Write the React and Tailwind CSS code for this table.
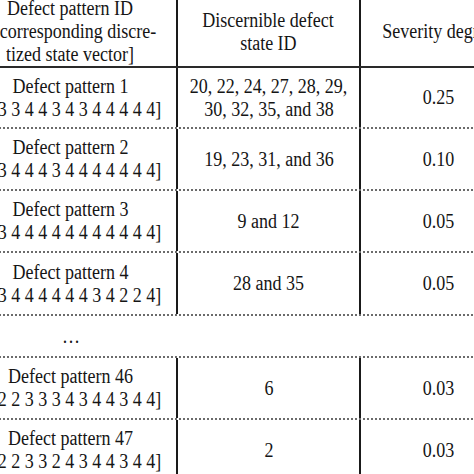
import React from "react";

const rows = [
  { h: "h-[61px]", name: "Defect pattern 1", vec: "[3 3 3 4 4 3 4 3 4 4 4 4 4]", ids: ["20, 22, 24, 27, 28, 29,", "30, 32, 35, and 38"], sev: "0.25" },
  { h: "h-[62px]", name: "Defect pattern 2", vec: "[3 3 4 4 4 3 4 4 4 4 4 4 4]", ids: ["19, 23, 31, and 36"], sev: "0.10" },
  { h: "h-[62px]", name: "Defect pattern 3", vec: "[3 3 4 4 4 4 4 4 4 4 4 4 4]", ids: ["9 and 12"], sev: "0.05" },
  { h: "h-[63px]", name: "Defect pattern 4", vec: "[3 3 4 4 4 4 4 4 3 4 2 2 4]", ids: ["28 and 35"], sev: "0.05" },
];

const rows2 = [
  { h: "h-[62px]", name: "Defect pattern 46", vec: "[2 2 2 3 3 3 4 3 4 4 3 4 4]", ids: ["6"], sev: "0.03" },
  { h: "h-[62px]", name: "Defect pattern 47", vec: "[2 2 2 3 3 2 4 3 4 4 3 4 4]", ids: ["2"], sev: "0.03" },
];

function Line({ children, className = "" }) {
  return <div className={`whitespace-nowrap scale-x-90 ${className}`}>{children}</div>;
}

function Row({ r }) {
  return (
    <div className={`flex ${r.h} border-b-2 border-dotted border-[#6b6b6b]`}>
      <div className="w-[214px] shrink-0 flex flex-col items-center justify-center border-r-2 border-[#1a1a1a]">
        <Line>{r.name}</Line>
        <Line>{r.vec}</Line>
      </div>
      <div className="w-[183px] shrink-0 flex flex-col items-center justify-center border-r-2 border-[#1a1a1a]">
        {r.ids.map((t, i) => (
          <Line key={i}>{t}</Line>
        ))}
      </div>
      <div className="w-[155px] shrink-0 flex flex-col items-center justify-center">
        <Line>{r.sev}</Line>
      </div>
    </div>
  );
}

export default function App() {
  return (
    <div
      className="w-[474px] h-[474px] overflow-hidden bg-white text-[#151515] text-[20px] leading-[23px]"
      style={{ fontFamily: '"Liberation Serif", "Times New Roman", serif' }}
    >
      <div className="w-[552px] -ml-[36px] -mt-[3px]">
        <div className="flex h-[71px] border-b-2 border-solid border-[#2a2a2a]">
          <div className="w-[214px] shrink-0 flex flex-col items-center justify-center border-r-2 border-[#1a1a1a]">
            <Line>Defect pattern ID</Line>
            <Line className="pl-[18px]">corresponding discre-</Line>
            <Line>tized state vector]</Line>
          </div>
          <div className="w-[183px] shrink-0 flex flex-col items-center justify-center border-r-2 border-[#1a1a1a]">
            <Line>Discernible defect</Line>
            <Line>state ID</Line>
          </div>
          <div className="w-[155px] shrink-0 flex flex-col items-center justify-center">
            <Line>Severity degree</Line>
          </div>
        </div>
        {rows.map((r, i) => (
          <Row key={i} r={r} />
        ))}
        <div className="flex h-[42px] border-b-2 border-dotted border-[#6b6b6b]">
          <div className="w-[214px] shrink-0 flex items-center justify-center">
            <Line>…</Line>
          </div>
        </div>
        {rows2.map((r, i) => (
          <Row key={i} r={r} />
        ))}
      </div>
    </div>
  );
}
